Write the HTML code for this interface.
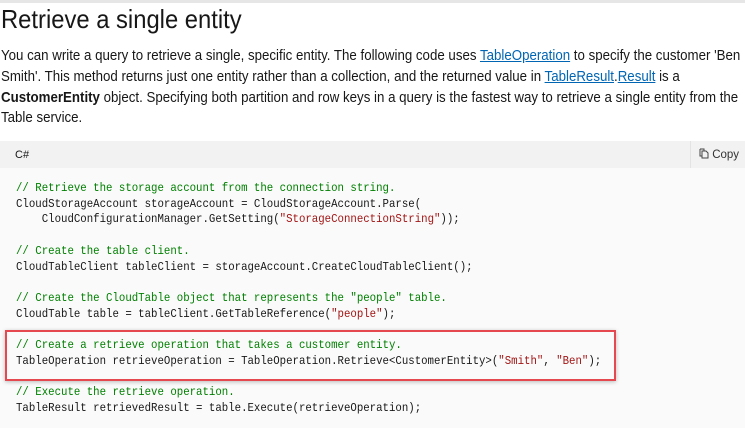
<!DOCTYPE html>
<html><head><meta charset="utf-8"><style>
*{margin:0;padding:0;box-sizing:border-box}
body{width:745px;height:420px;overflow:hidden;background:#fff;font-family:"Liberation Sans",sans-serif;color:#171717;position:relative}
.top{position:absolute;left:0;top:0;width:745px;height:3px;background:#e6e6e6}
h1{position:absolute;left:1px;top:3px;font-size:26px;font-weight:normal;white-space:nowrap;transform:scaleX(0.915);transform-origin:left;line-height:32px}
.p{position:absolute;left:1px;font-size:15px;white-space:nowrap;transform:scaleX(0.886);transform-origin:left;line-height:20px}
a{color:#0065b3;text-decoration:underline}
.hdr{position:absolute;left:0;top:141px;width:745px;height:27px;background:#f2f2f2;font-size:11px}
.hdr .l{position:absolute;left:15px;top:8px}
.hdr .d{position:absolute;left:690px;top:0;width:1px;height:27px;background:#e3e3e3}
.hdr .c{position:absolute;left:699px;top:7px;font-size:11.5px;color:#333}
.code{position:absolute;left:0;top:168px;width:745px;height:260px;background:#fafafa}
pre{position:absolute;left:16px;top:13px;font-family:"Liberation Mono",monospace;font-size:12px;line-height:15.7px;color:#171717;transform:scaleX(0.893);transform-origin:left top}
.cm{color:#008000}.s{color:#a31515}
.box{position:absolute;left:5px;top:330px;width:611px;height:51px;border:2px solid #e5484e;box-shadow:0 1px 4px rgba(0,0,0,.25)}
</style></head><body>
<div class="top"></div>
<h1>Retrieve a single entity</h1>
<div class="p" style="top:46px">You can write a query to retrieve a single, specific entity. The following code uses <a>TableOperation</a> to specify the customer 'Ben</div>
<div class="p" style="top:67px">Smith'. This method returns just one entity rather than a collection, and the returned value in <a>TableResult</a>.<a>Result</a> is a</div>
<div class="p" style="top:88px"><b>CustomerEntity</b> object. Specifying both partition and row keys in a query is the fastest way to retrieve a single entity from the</div>
<div class="p" style="top:108px">Table service.</div>
<div class="hdr"><span class="l">C#</span><span class="d"></span><span class="c"><svg width="10" height="11" viewBox="0 0 10 11" style="vertical-align:-1px"><path d="M1 1h4v2M1 1v7h2M3 3h4l2 2v5H3z" fill="none" stroke="#444" stroke-width="1"/></svg> Copy</span></div>
<div class="code"><pre><span class="cm">// Retrieve the storage account from the connection string.</span>
CloudStorageAccount storageAccount = CloudStorageAccount.Parse(
    CloudConfigurationManager.GetSetting(<span class="s">"StorageConnectionString"</span>));

<span class="cm">// Create the table client.</span>
CloudTableClient tableClient = storageAccount.CreateCloudTableClient();

<span class="cm">// Create the CloudTable object that represents the "people" table.</span>
CloudTable table = tableClient.GetTableReference(<span class="s">"people"</span>);

<span class="cm">// Create a retrieve operation that takes a customer entity.</span>
TableOperation retrieveOperation = TableOperation.Retrieve&lt;CustomerEntity&gt;(<span class="s">"Smith"</span>, <span class="s">"Ben"</span>);

<span class="cm">// Execute the retrieve operation.</span>
TableResult retrievedResult = table.Execute(retrieveOperation);</pre></div>
<div class="box"></div>
</body></html>
